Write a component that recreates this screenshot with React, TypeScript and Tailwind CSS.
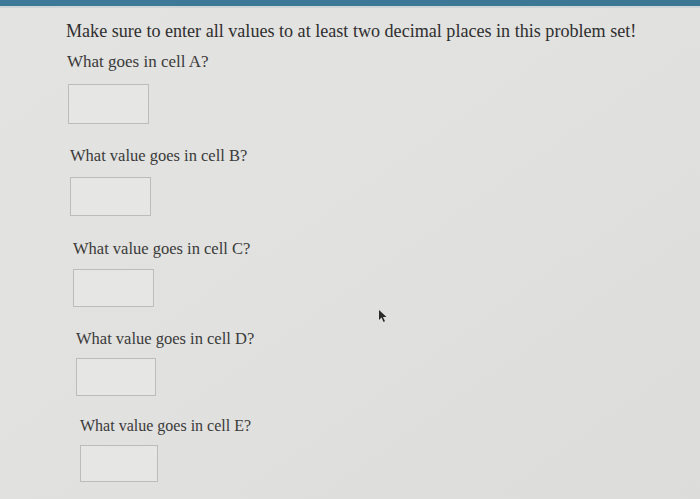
import React from 'react';

const questions = [
  { label: 'What goes in cell A?', size: 'text-[17px]', indent: 'ml-[67px]', boxIndent: 'ml-[68px]', gap: 'mt-[11px]', boxGap: 'mt-[12px]', box: 'h-[40px] w-[81px]' },
  { label: 'What value goes in cell B?', size: 'text-[16.5px]', indent: 'ml-[70px]', boxIndent: 'ml-[70px]', gap: 'mt-[22px]', boxGap: 'mt-[11px]', box: 'h-[39px] w-[81px]' },
  { label: 'What value goes in cell C?', size: 'text-[16.5px]', indent: 'ml-[73px]', boxIndent: 'ml-[73px]', gap: 'mt-[23px]', boxGap: 'mt-[10px]', box: 'h-[38px] w-[81px]' },
  { label: 'What value goes in cell D?', size: 'text-[16.5px]', indent: 'ml-[76px]', boxIndent: 'ml-[76px]', gap: 'mt-[22px]', boxGap: 'mt-[9px]', box: 'h-[38px] w-[80px]' },
  { label: 'What value goes in cell E?', size: 'text-[16px]', indent: 'ml-[80px]', boxIndent: 'ml-[80px]', gap: 'mt-[20px]', boxGap: 'mt-[9px]', box: 'h-[37px] w-[78px]' },
];

const App: React.FC = () => {
  return (
    <div className="relative w-[700px] h-[499px] overflow-hidden bg-gradient-to-br from-[#e3e3e1] via-[#e1e1df] to-[#dcdcda] text-[#353535] font-['Liberation_Serif',serif]">
      <div className="h-[6px] bg-gradient-to-r from-[#3d7a98] to-[#3b7793]" />
      <div className="h-[2px] bg-[#cfd6d8]" />

      <div className="flex flex-col">
        <p className="mt-[13px] ml-[66px] text-[18.1px] leading-[20px] text-[#2f2f2f]">
          Make sure to enter all values to at least two decimal places in this problem set!
        </p>

        {questions.map((q) => (
          <div key={q.label} className={`flex flex-col ${q.gap}`}>
            <p className={`${q.indent} ${q.size} leading-[20px] text-[#3a3a3a]`}>{q.label}</p>
            <input
              type="text"
              aria-label={q.label}
              className={`${q.boxIndent} ${q.boxGap} ${q.box} border border-[#bcbcba] bg-[#e6e6e4] outline-none`}
            />
          </div>
        ))}
      </div>

      <svg className="absolute left-[378px] top-[309px]" width="10" height="14" viewBox="0 0 10 14">
        <path d="M1 1 L1 11 L3.5 8.5 L5.5 13 L7 12.3 L5 8 L8.5 8 Z" fill="#2a2a2a" />
      </svg>
    </div>
  );
};

export default App;
